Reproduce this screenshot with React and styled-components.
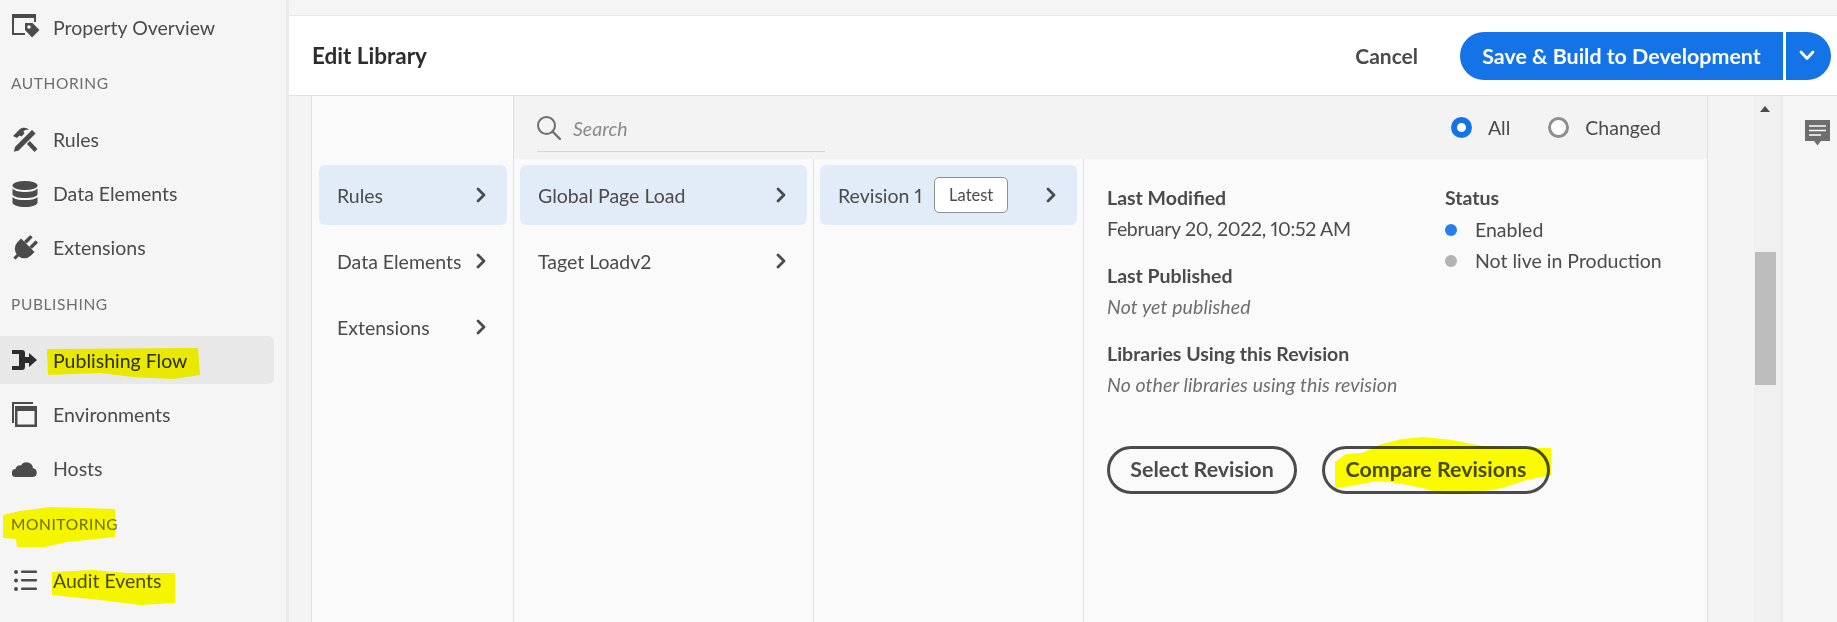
import React from 'react';
import styled, { createGlobalStyle } from 'styled-components';

const GlobalStyle = createGlobalStyle`
    html, body {
        margin: 0;
        padding: 0;
        background: #f5f5f5;
    }

    * {
        box-sizing: border-box;
    }
`;

const Page = styled.div`
    position: relative;
    display: flex;
    width: 1837px;
    height: 622px;
    overflow: hidden;
    font-family: 'Lato', sans-serif;
    font-size: 19.5px;
    font-variant-numeric: proportional-nums;
    color: #4b4b4b;
`;

const Sidebar = styled.nav`
    flex: none;
    display: flex;
    flex-direction: column;
    gap: 6px;
    width: 289px;
    padding: 3px 12px 0 0;
    background: #f5f5f5;
    border-right: 3px solid #ebebeb;
`;

const NavLabel = styled.div`
    display: flex;
    align-items: center;
    height: 52.5px;
    padding-left: 11px;
    font-size: 15.5px;
    letter-spacing: 0.6px;
    color: #6e6e6e;
`;

const NavRow = styled.div`
    display: flex;
    align-items: center;
    height: 48px;
    padding-left: 12px;
    border-radius: 0 6px 6px 0;
    background: ${(p) => (p.$active ? '#e8e8e8' : 'transparent')};
    color: ${(p) => (p.$active ? '#2c2c2c' : '#4b4b4b')};
`;

const NavIcon = styled.span`
    flex: none;
    display: flex;
    align-items: center;
    width: 41px;
`;

const Main = styled.div`
    flex: 1;
    display: flex;
    flex-direction: column;
    min-width: 0;
`;

const TopStrip = styled.div`
    flex: none;
    height: 16px;
    border-bottom: 1px solid #e6e6e6;
`;

const Header = styled.header`
    flex: none;
    display: flex;
    align-items: center;
    height: 80px;
    padding: 0 6px 0 23px;
    background: #fff;
    border-bottom: 1px solid #e1e1e1;
`;

const Title = styled.h1`
    flex: 1;
    margin: 0;
    font-size: 22.5px;
    font-weight: 700;
    color: #2c2c2c;
`;

const CancelLink = styled.span`
    margin-right: 42px;
    font-size: 21px;
    font-weight: 700;
`;

const SplitButton = styled.div`
    display: flex;
    gap: 3px;
    height: 48px;
    color: #fff;
    font-size: 21.4px;
    font-weight: 700;
`;

const SaveButton = styled.div`
    display: flex;
    align-items: center;
    justify-content: center;
    width: 323px;
    background: #1473e6;
    border-radius: 24px 0 0 24px;
`;

const MenuButton = styled.div`
    display: flex;
    align-items: center;
    justify-content: center;
    width: 45px;
    padding-right: 3px;
    background: #1473e6;
    border-radius: 0 24px 24px 0;
`;

const Body = styled.div`
    flex: 1;
    display: flex;
    min-height: 0;
`;

const Gutter = styled.div`
    flex: none;
    width: 23px;
    background: #f4f4f4;
    border-right: 1px solid #e1e1e1;
`;

const Categories = styled.div`
    flex: none;
    width: 202px;
    padding: 69px 6px 0 7px;
    background: #fafafa;
    border-right: 1px solid #e1e1e1;
`;

const Browser = styled.div`
    flex: none;
    display: flex;
    flex-direction: column;
    width: 1194px;
    border-right: 1px solid #e1e1e1;
`;

const FilterBar = styled.div`
    flex: none;
    display: flex;
    justify-content: space-between;
    height: 63px;
    padding: 0 46px 0 23px;
    background: #f3f3f3;
`;

const SearchField = styled.div`
    display: flex;
    align-items: center;
    gap: 12px;
    width: 288px;
    height: 56px;
    padding-top: 9px;
    border-bottom: 1px solid #d6d6d6;
    font-style: italic;
    color: #8a8a8a;
    font-size: 19.5px;
`;

const RadioGroup = styled.div`
    display: flex;
    align-items: center;
    height: 63px;
`;

const RadioDot = styled.span`
    width: 21px;
    height: 21px;
    margin: 0 16px 0 ${(p) => (p.$on ? '0' : '38px')};
    border-radius: 50%;
    background: #fff;
    border: ${(p) => (p.$on ? '6px solid #1473e6' : '3px solid #8e8e8e')};
`;

const Columns = styled.div`
    flex: 1;
    display: flex;
    min-height: 0;
    background: #fafafa;
`;

const ListColumn = styled.div`
    flex: none;
    width: ${(p) => p.$width}px;
    padding: 6px 6px 0;
    border-right: 1px solid #e1e1e1;
`;

const ListItem = styled.div`
    display: flex;
    align-items: center;
    justify-content: space-between;
    height: 60px;
    margin-bottom: 6px;
    padding: 0 21px 0 18px;
    border-radius: 6px;
    background: ${(p) => (p.$selected ? '#e2ecf8' : 'transparent')};
`;

const ItemName = styled.span`
    display: flex;
    align-items: center;
    gap: 12px;
`;

const LatestBadge = styled.span`
    display: flex;
    align-items: center;
    justify-content: center;
    width: 74px;
    height: 36px;
    background: #fff;
    border: 1px solid #8e8e8e;
    border-radius: 5px;
    font-size: 16.5px;
`;

const Details = styled.div`
    flex: 1;
    padding: 24px 0 0 23px;
`;

const DetailTop = styled.div`
    display: flex;
`;

const InfoColumn = styled.div`
    display: flex;
    flex-direction: column;
    gap: 16px;
    width: 338px;
`;

const InfoLabel = styled.div`
    height: 31px;
    line-height: 30px;
    font-weight: 700;
`;

const InfoValue = styled.div`
    height: 31px;
    line-height: 30px;
    white-space: nowrap;
    letter-spacing: ${(p) => (p.$muted ? '0.1px' : '-0.3px')};
    font-style: ${(p) => (p.$muted ? 'italic' : 'normal')};
    color: ${(p) => (p.$muted ? '#6e6e6e' : '#4b4b4b')};
`;

const StatusRow = styled.div`
    display: flex;
    align-items: center;
    gap: 18px;
    height: 31px;
    white-space: nowrap;
`;

const StatusDot = styled.span`
    width: 12px;
    height: 12px;
    border-radius: 50%;
    background: ${(p) => p.$color};
`;

const Actions = styled.div`
    display: flex;
    gap: 25px;
    margin-top: 45px;
`;

const OutlineButton = styled.div`
    display: flex;
    align-items: center;
    justify-content: center;
    width: ${(p) => p.$width}px;
    height: 48px;
    padding-bottom: 2px;
    border: 3px solid #4b4b4b;
    border-radius: 24px;
    font-size: 21.4px;
    font-weight: 700;
`;

const ScrollGutter = styled.div`
    flex: none;
    width: 46px;
    background: #f4f4f4;
`;

const ScrollTrack = styled.div`
    position: relative;
    flex: none;
    width: 26px;
    background: #f0f0f0;
`;

const ScrollArrow = styled.div`
    position: absolute;
    top: 10px;
    left: 6px;
    border-left: 5.5px solid transparent;
    border-right: 5.5px solid transparent;
    border-bottom: 6px solid #4b4b4b;
`;

const ScrollThumb = styled.div`
    position: absolute;
    top: 156px;
    left: 1px;
    width: 21px;
    height: 133px;
    background: #bdbdbd;
`;

const CommentRail = styled.div`
    flex: 1;
    padding: 24px 0 0 22px;
    background: #f5f5f5;
    border-left: 3px solid #ebebeb;
`;

const MarkerLayer = styled.svg`
    position: absolute;
    inset: 0;
    mix-blend-mode: multiply;
    pointer-events: none;
`;

const Chevron = () => (
    <svg width="10" height="16" viewBox="0 0 10 16">
        <path
            d="M2 2l6 6-6 6"
            fill="none"
            stroke="#4b4b4b"
            strokeWidth="2.8"
            strokeLinecap="round"
            strokeLinejoin="round"
        />
    </svg>
);

const OverviewIcon = () => (
    <svg width="28" height="26" viewBox="0 0 28 26" fill="#4b4b4b">
        <path d="M0 0h24v8h-2V4H2v15h11v2H0z" />
        <path d="M13 9h7.500l7 7-7.500 7.500-7-7.500z" />
        <circle cx="17" cy="13" r="1.800" fill="#f5f5f5" />
    </svg>
);

const RulesIcon = () => (
    <svg width="26" height="26" viewBox="0 0 26 26" fill="#4b4b4b">
        <path d="M1 9l7-7c2-1.500 5-1.800 7.500-.5l1.500 1.500c-2.500-.5-4.500 0-5.500 1.500l1 2-3 3-2-1-2.500 2.500z" />
        <path d="M12.500 14.500l3-3 10 10.500-3 3z" />
        <path d="M1 25.500l1.500-6L20 2l4.500 4.500L7 24z" stroke="#f5f5f5" strokeWidth="1.200" />
    </svg>
);

const DataIcon = () => (
    <svg width="26" height="26" viewBox="0 0 26 26" fill="#4b4b4b">
        <ellipse cx="13" cy="4.500" rx="12.500" ry="4.500" />
        <path d="M.5 7.500C2.500 10 7.500 11 13 11s10.500-1 12.500-3.500V13c0 2.500-5.500 4-12.500 4S.5 15.500.5 13z" />
        <path d="M.5 16C2.500 18.500 7.500 19 13 19s10.500-.5 12.500-3v5.500c0 2.500-5.500 4.500-12.500 4.500S.5 24 .5 21.500z" />
    </svg>
);

const PlugIcon = () => (
    <svg width="26" height="26" viewBox="0 0 26 26" fill="#4b4b4b">
        <g transform="rotate(45 13 13) translate(0 1)">
            <rect x="7.500" y="-1" width="3.500" height="9" rx="1" />
            <rect x="15" y="-1" width="3.500" height="9" rx="1" />
            <path d="M3.500 8h19v5a9.500 9.500 0 0 1-19 0z" />
            <rect x="11.500" y="20" width="3" height="7" />
        </g>
    </svg>
);

const FlowIcon = () => (
    <svg width="25" height="20" viewBox="0 0 25 20" fill="#2c2c2c">
        <path d="M0 0h10c2 0 3 1 3 3v4h4V3l8 7-8 7v-4h-4v4c0 2-1 3-3 3H0v-4h7V4H0z" />
    </svg>
);

const EnvironmentsIcon = () => (
    <svg width="25" height="25" viewBox="0 0 25 25" fill="#4b4b4b">
        <path d="M0 0h21v2H2v19H0z" />
        <path d="M3 4h22v21H3zm2.500 5v13.500h17V9z" />
    </svg>
);

const CloudIcon = () => (
    <svg width="25" height="17" viewBox="0 0 25 17" fill="#4b4b4b">
        <path d="M4 17a4 4 0 0 1-.5-8A4.500 4.500 0 0 1 9 5.500a6.500 6.500 0 0 1 12 2.800A4.400 4.400 0 0 1 21 17z" />
    </svg>
);

const ListIcon = () => (
    <svg width="25" height="23" viewBox="0 0 25 23" fill="#4b4b4b">
        <circle cx="4" cy="3" r="2" />
        <circle cx="4" cy="11.500" r="2" />
        <circle cx="4" cy="20" r="2" />
        <rect x="9" y="1.500" width="16" height="2.500" rx="1" />
        <rect x="9" y="10" width="16" height="2.500" rx="1" />
        <rect x="9" y="18.500" width="16" height="2.500" rx="1" />
    </svg>
);

const SearchIcon = () => (
    <svg width="24" height="24" viewBox="0 0 24 24" fill="none" stroke="#6e6e6e" strokeWidth="2">
        <circle cx="9.500" cy="9.500" r="8.500" />
        <path d="M15.500 15.500l7.500 7.500" strokeWidth="2.400" strokeLinecap="round" />
    </svg>
);

const CommentIcon = () => (
    <svg width="25" height="26" viewBox="0 0 25 26">
        <path d="M0 0h25v21h-9l-3.500 4.500L9 21H0z" fill="#6e6e6e" />
        <path d="M4 6h17M4 10.500h17M4 15h12" stroke="#fff" strokeWidth="1.600" />
    </svg>
);

const WhiteChevron = () => (
    <svg width="16" height="11" viewBox="0 0 16 11">
        <path
            d="M2 2l6 6.500L14 2"
            fill="none"
            stroke="#fff"
            strokeWidth="2.800"
            strokeLinecap="round"
            strokeLinejoin="round"
        />
    </svg>
);

const navGroups = [
    { items: [{ name: 'Property Overview', icon: <OverviewIcon /> }] },
    {
        label: 'AUTHORING',
        items: [
            { name: 'Rules', icon: <RulesIcon /> },
            { name: 'Data Elements', icon: <DataIcon /> },
            { name: 'Extensions', icon: <PlugIcon /> },
        ],
    },
    {
        label: 'PUBLISHING',
        items: [
            { name: 'Publishing Flow', icon: <FlowIcon />, active: true },
            { name: 'Environments', icon: <EnvironmentsIcon /> },
            { name: 'Hosts', icon: <CloudIcon /> },
        ],
    },
    {
        label: 'MONITORING',
        items: [{ name: 'Audit Events', icon: <ListIcon /> }],
    },
];

const markers = [
    '47,349 198,348 200,375 173,379 133,377 100,373 48,375',
    '3,515 20,511 50,507 115,509 115,537 67,542 45,547 17,547 16,539 3,538',
    '52,572 93,570 127,573 175,573 175,603 140,605 100,600 52,595',
    '1335,462 1346,454 1362,453 1382,444 1402,439 1424,437 1452,440 1482,446 1522,448 1551,448 1551,475 1527,480 1502,488 1467,494 1444,494 1422,488 1397,483 1377,481 1351,486 1335,488',
];

function App() {
    return (
        <Page>
            <GlobalStyle />
            <Sidebar>
                {navGroups.map((group) => (
                    <React.Fragment key={group.items[0].name}>
                        {group.label && <NavLabel>{group.label}</NavLabel>}
                        {group.items.map((item) => (
                            <NavRow key={item.name} $active={item.active}>
                                <NavIcon>{item.icon}</NavIcon>
                                {item.name}
                            </NavRow>
                        ))}
                    </React.Fragment>
                ))}
            </Sidebar>

            <Main>
                <TopStrip />
                <Header>
                    <Title>Edit Library</Title>
                    <CancelLink>Cancel</CancelLink>
                    <SplitButton>
                        <SaveButton>Save &amp; Build to Development</SaveButton>
                        <MenuButton>
                            <WhiteChevron />
                        </MenuButton>
                    </SplitButton>
                </Header>

                <Body>
                    <Gutter />
                    <Categories>
                        <ListItem $selected>
                            Rules
                            <Chevron />
                        </ListItem>
                        <ListItem>
                            Data Elements
                            <Chevron />
                        </ListItem>
                        <ListItem>
                            Extensions
                            <Chevron />
                        </ListItem>
                    </Categories>

                    <Browser>
                        <FilterBar>
                            <SearchField>
                                <SearchIcon />
                                Search
                            </SearchField>
                            <RadioGroup>
                                <RadioDot $on />
                                All
                                <RadioDot />
                                Changed
                            </RadioGroup>
                        </FilterBar>

                        <Columns>
                            <ListColumn $width={300}>
                                <ListItem $selected>
                                    Global Page Load
                                    <Chevron />
                                </ListItem>
                                <ListItem>
                                    Taget Loadv2
                                    <Chevron />
                                </ListItem>
                            </ListColumn>
                            <ListColumn $width={270}>
                                <ListItem $selected>
                                    <ItemName>
                                        Revision 1<LatestBadge>Latest</LatestBadge>
                                    </ItemName>
                                    <Chevron />
                                </ListItem>
                            </ListColumn>

                            <Details>
                                <DetailTop>
                                    <InfoColumn>
                                        <div>
                                            <InfoLabel>Last Modified</InfoLabel>
                                            <InfoValue>February 20, 2022, 10:52 AM</InfoValue>
                                        </div>
                                        <div>
                                            <InfoLabel>Last Published</InfoLabel>
                                            <InfoValue $muted>Not yet published</InfoValue>
                                        </div>
                                        <div>
                                            <InfoLabel>Libraries Using this Revision</InfoLabel>
                                            <InfoValue $muted>
                                                No other libraries using this revision
                                            </InfoValue>
                                        </div>
                                    </InfoColumn>
                                    <div>
                                        <InfoLabel>Status</InfoLabel>
                                        <StatusRow>
                                            <StatusDot $color="#2680eb" />
                                            Enabled
                                        </StatusRow>
                                        <StatusRow>
                                            <StatusDot $color="#b3b3b3" />
                                            Not live in Production
                                        </StatusRow>
                                    </div>
                                </DetailTop>
                                <Actions>
                                    <OutlineButton $width={190}>Select Revision</OutlineButton>
                                    <OutlineButton $width={228}>Compare Revisions</OutlineButton>
                                </Actions>
                            </Details>
                        </Columns>
                    </Browser>

                    <ScrollGutter />
                    <ScrollTrack>
                        <ScrollArrow />
                        <ScrollThumb />
                    </ScrollTrack>
                    <CommentRail>
                        <CommentIcon />
                    </CommentRail>
                </Body>
            </Main>

            <MarkerLayer width="1837" height="622" viewBox="0 0 1837 622">
                {markers.map((points) => (
                    <polygon key={points} points={points} fill="#ffff00" />
                ))}
            </MarkerLayer>
        </Page>
    );
}

export default App;
